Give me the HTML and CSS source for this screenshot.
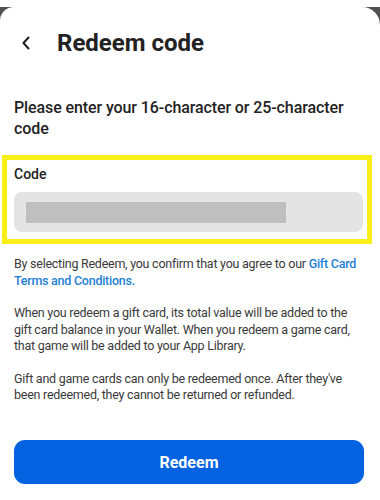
FILE: index.html
```html
<!DOCTYPE html>
<html lang="en">
<head>
<meta charset="utf-8">
<title>Redeem code</title>
<link rel="stylesheet" href="styles.css">
</head>
<body>
<div class="top-strip"></div>
<div class="backdrop">
  <main class="sheet">
    <header class="header">
      <span class="back" aria-label="Back">
        <svg width="24" height="24" viewBox="0 0 24 24"><path d="M14.5 6.5 L9.5 12 L14.5 17.5" fill="none" stroke="#1f1f1f" stroke-width="2" stroke-linecap="round" stroke-linejoin="round"/></svg>
      </span>
      <h1 class="title">Redeem code</h1>
    </header>

    <h2 class="prompt">Please enter your 16-character or 25-character code</h2>

    <section class="field">
      <div class="field-label">Code</div>
      <div class="input"><div class="input-mask"></div></div>
    </section>

    <p class="copy">By selecting Redeem, you confirm that you agree to our <a class="link" href="#">Gift Card Terms and Conditions.</a></p>
    <p class="copy">When you redeem a gift card, its total value will be added to the gift card balance in your Wallet. When you redeem a game card, that game will be added to your App Library.</p>
    <p class="copy">Gift and game cards can only be redeemed once. After they've been redeemed, they cannot be returned or refunded.</p>

    <button class="redeem" type="button">Redeem</button>
  </main>
</div>
</body>
</html>
```

FILE: styles.css
```css
* { box-sizing: border-box; }

html, body {
  margin: 0;
  padding: 0;
  height: 100%;
}

body {
  background: #ffffff;
  font-family: Roboto, "Noto Sans", "Liberation Sans", sans-serif;
  display: flex;
  flex-direction: column;
  height: 500px;
  overflow: hidden;
}

.top-strip {
  height: 7px;
  background: #ffffff;
  flex: none;
}

.backdrop {
  flex: 1;
  background: #525252;
  display: flex;
  flex-direction: column;
}

.sheet {
  flex: 1;
  background: #ffffff;
  border-radius: 14px 18px 0 0;
  display: flex;
  flex-direction: column;
  padding: 0 16px 16px 14px;
}

.header {
  height: 72px;
  display: flex;
  align-items: center;
  flex: none;
}

.back {
  width: 24px;
  height: 24px;
  display: flex;
}

.back svg { display: block; }

.title {
  margin: 0 0 0 19px;
  font-size: 24px;
  line-height: 30px;
  font-weight: 700;
  color: #222222;
}

.prompt {
  margin: 18px 0 0 0;
  font-size: 16px;
  line-height: 21px;
  font-weight: 500;
  letter-spacing: -0.1px;
  color: #222222;
}

.field {
  margin: 16px -8px 0 -12px;
  border: 5px solid #f7ef16;
  padding: 5px 4px 7px 7px;
}

.field-label {
  font-size: 14px;
  line-height: 18px;
  font-weight: 500;
  color: #222222;
}

.input {
  margin-top: 9px;
  height: 40px;
  background: #e4e4e4;
  border-radius: 8px;
  padding: 10px 0 0 12px;
}

.input-mask {
  width: 260px;
  height: 21px;
  background: #bfbfbf;
}

.copy {
  margin: 16px 0 0 0;
  font-size: 12.5px;
  line-height: 16.5px;
  letter-spacing: -0.25px;
  color: #3a3a3a;
}

.copy:first-of-type { margin-top: 12px; }

.link {
  color: #1f7fd3;
  font-weight: 500;
  text-decoration: none;
}

.redeem {
  margin-top: auto;
  height: 44px;
  width: 350px;
  border: none;
  border-radius: 11px;
  background: #0362df;
  color: #ffffff;
  font-family: Roboto, "Noto Sans", "Liberation Sans", sans-serif;
  font-size: 16px;
  font-weight: 700;
  cursor: pointer;
}
```
